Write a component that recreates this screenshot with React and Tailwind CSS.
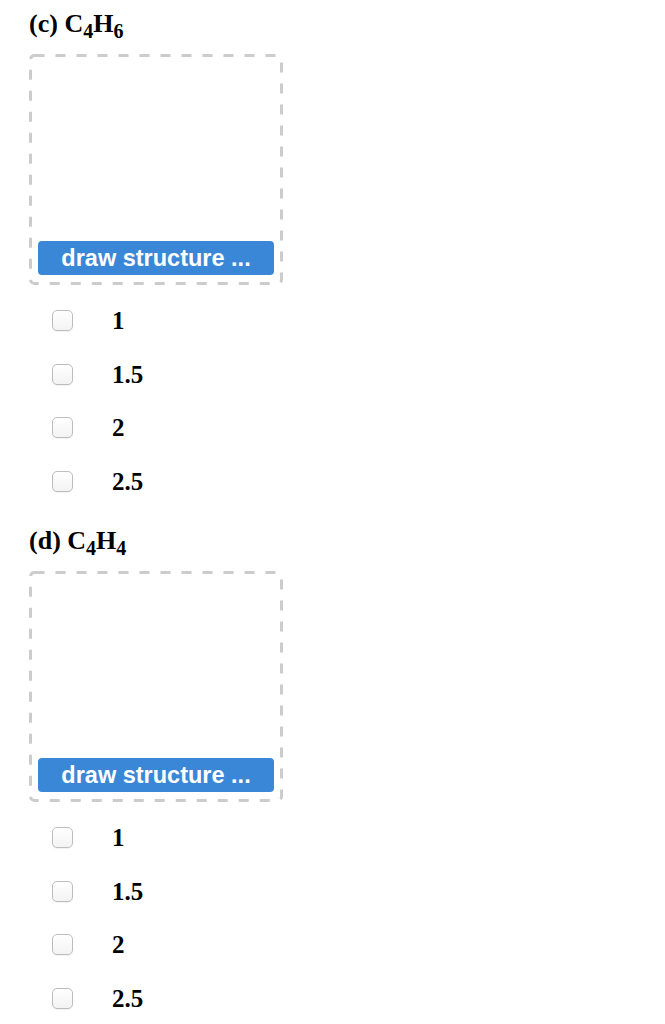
const questions = [
  { letter: "c", h: "6" },
  { letter: "d", h: "4" },
];

const options = ["1", "1.5", "2", "2.5"];

function Question({ letter, h }) {
  return (
    <div className="flex flex-col">
      {/* Formula heading */}
      <div className="h-[32px] leading-[32px] text-[26px] font-bold text-black font-['Liberation_Serif',serif] whitespace-nowrap">
        ({letter}) C<span className="relative top-[6px] text-[20px]">4</span>H
        <span className="relative top-[6px] text-[20px]">{h}</span>
      </div>

      {/* Drawing area, dashed outline drawn as svg for the long dashes */}
      <div className="relative mt-[14px] flex h-[231px] w-[254px] flex-col justify-end px-[9px] pb-[10px]">
        <svg className="absolute inset-0 h-full w-full" viewBox="0 0 254 231" fill="none">
          <rect
            x="1.5"
            y="1.5"
            width="251"
            height="228"
            rx="4"
            stroke="#cccccc"
            strokeWidth="3"
            strokeDasharray="10 11"
          />
        </svg>
        <button className="relative h-[34px] w-full rounded-[4px] bg-[#3a87d7] text-[23.5px] font-bold text-white font-['Liberation_Sans',Arial,sans-serif]">
          draw structure ...
        </button>
      </div>

      {/* Choices */}
      <div className="mt-[9px] flex flex-col">
        {options.map((o) => (
          <label key={o} className="flex h-[53.5px] items-center">
            <span className="ml-[23px] h-[21px] w-[21px] rounded-[5px] border border-[#bdbdbd] bg-gradient-to-b from-white to-[#f3f3f3] shadow-[0_1px_1px_rgba(0,0,0,0.06)]" />
            <span className="ml-[39px] text-[25px] font-bold text-black font-['Liberation_Serif',serif]">
              {o}
            </span>
          </label>
        ))}
      </div>
    </div>
  );
}

export default function App() {
  return (
    <div className="min-h-[1024px] w-[665px] bg-white pl-[29px] pt-[8px]">
      <div className="flex flex-col gap-[17px]">
        {questions.map((q) => (
          <Question key={q.letter} {...q} />
        ))}
      </div>
    </div>
  );
}
